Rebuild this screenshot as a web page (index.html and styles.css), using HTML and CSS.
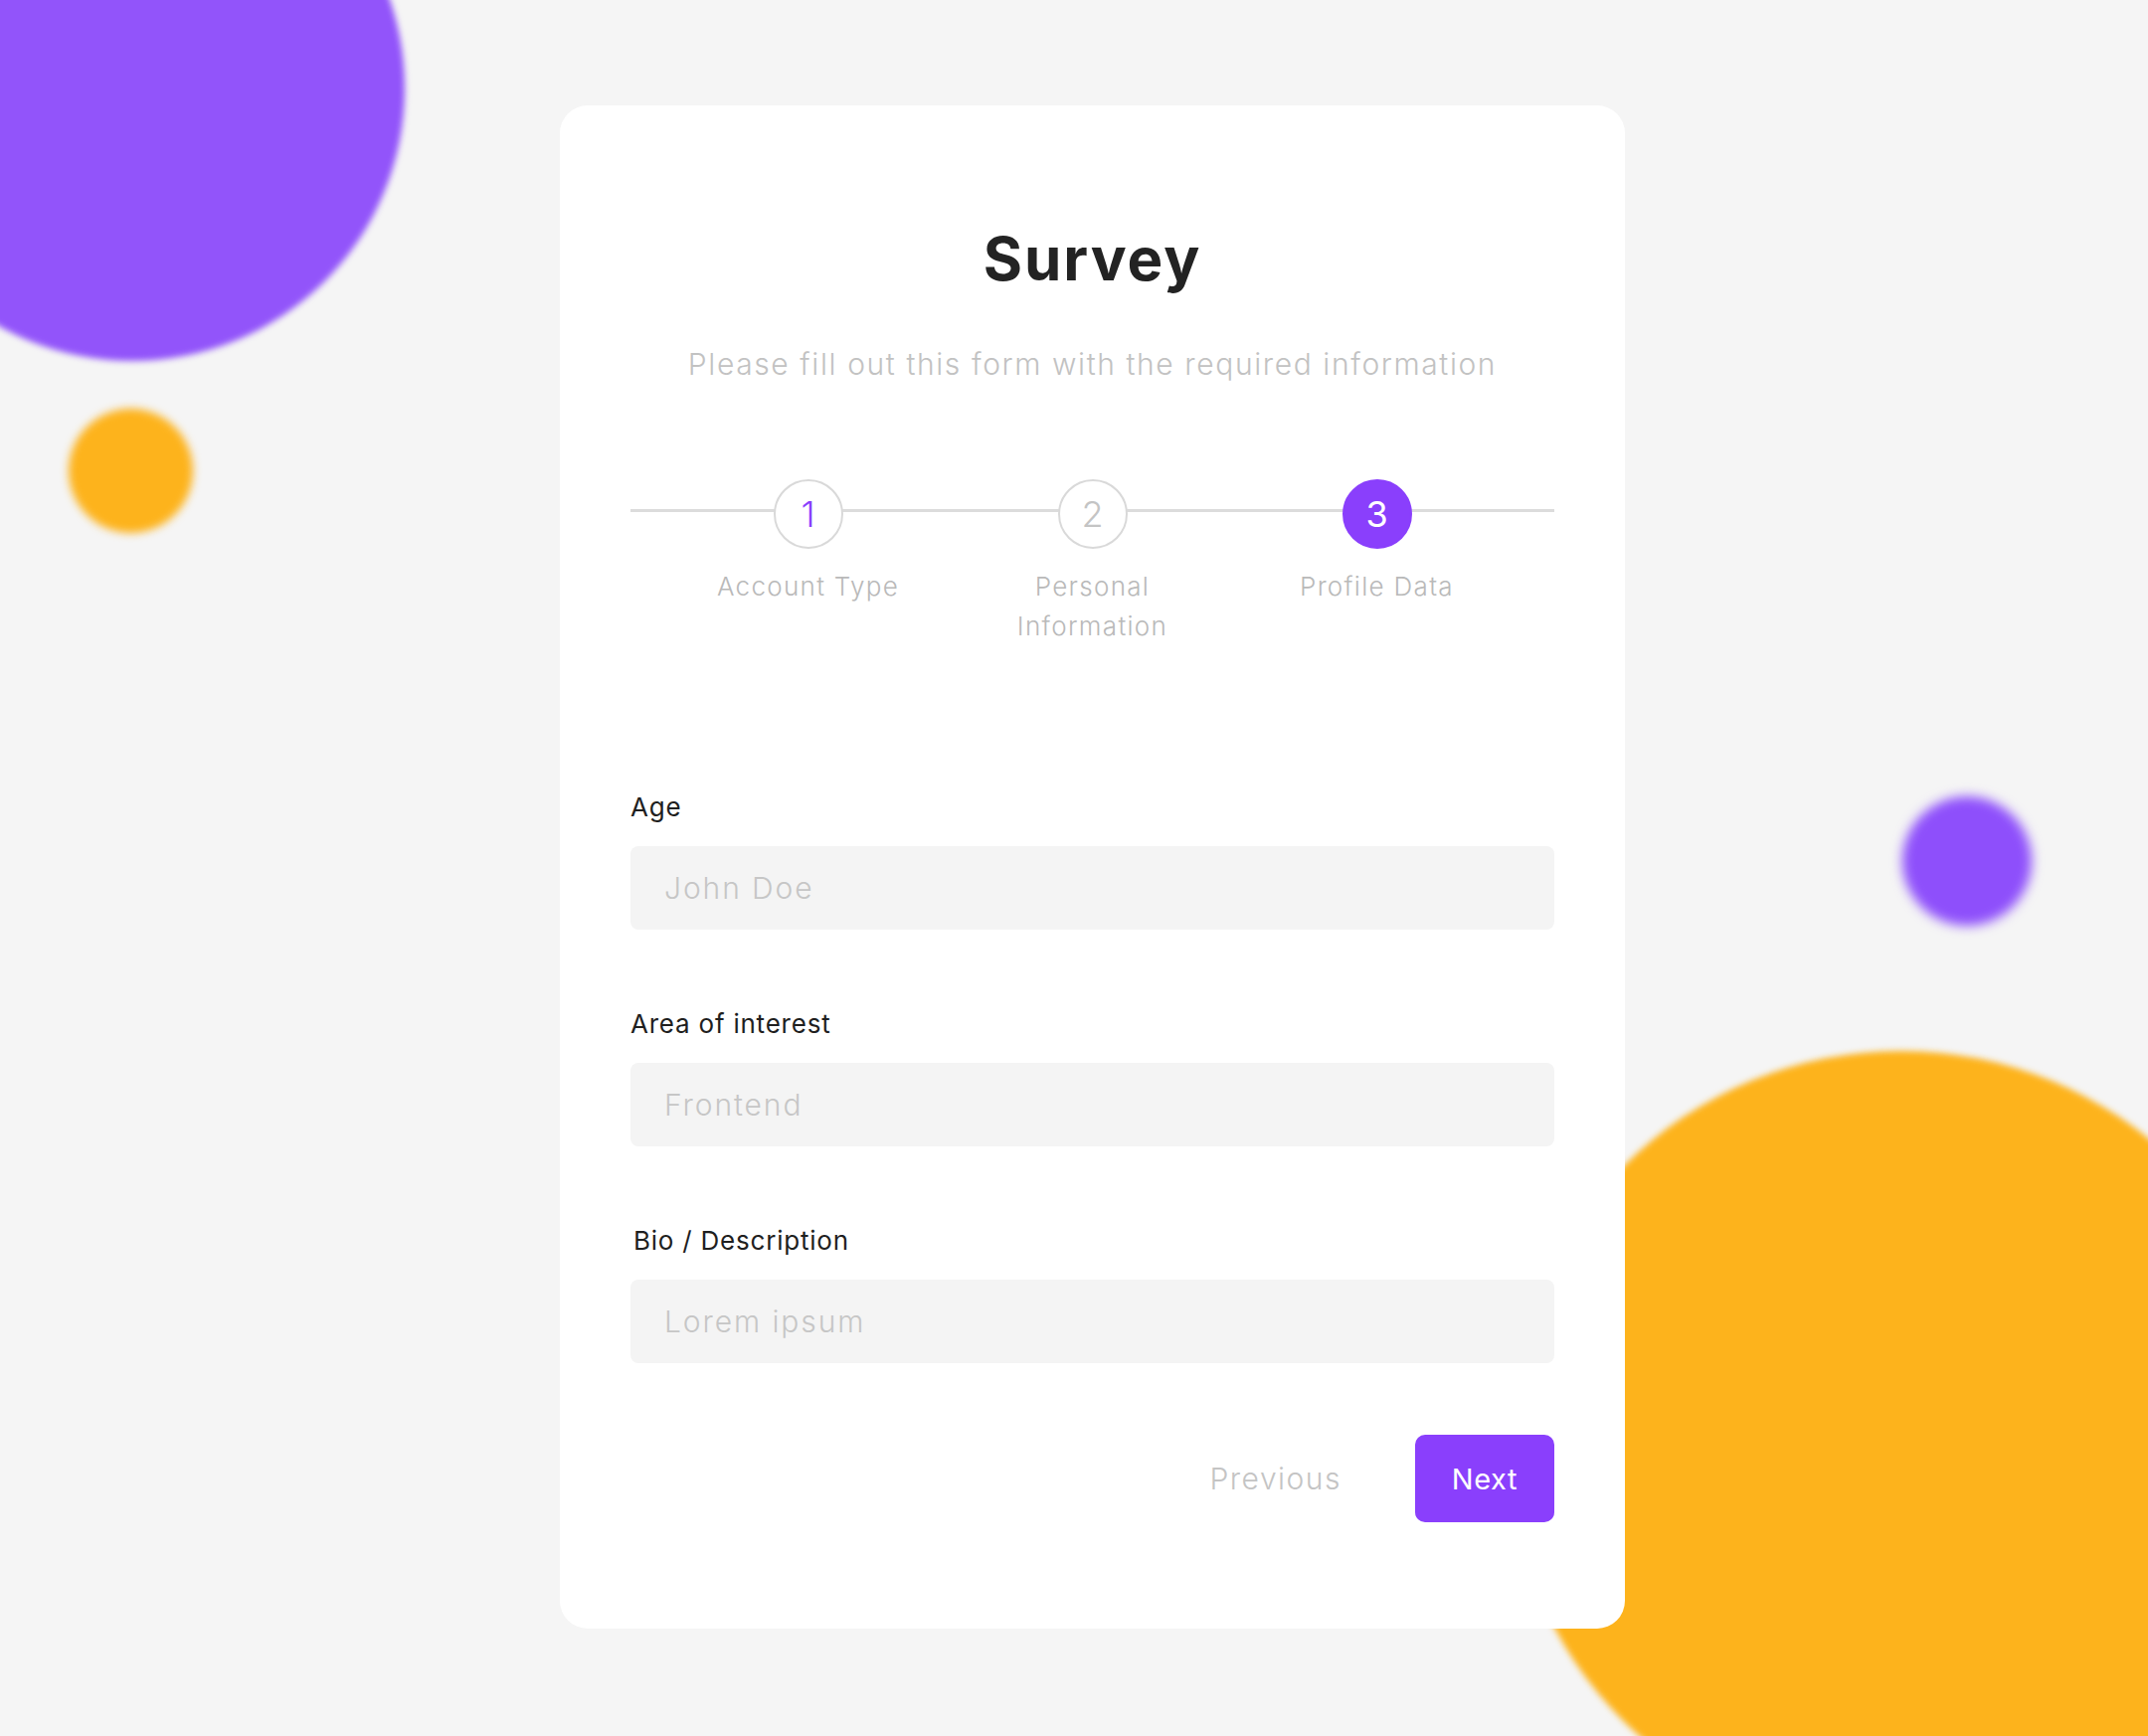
FILE: index.html
```html
<!DOCTYPE html>
<html lang="en">
<head>
<meta charset="utf-8">
<title>Survey</title>
<link rel="stylesheet" href="styles.css">
</head>
<body>
<div class="bg" aria-hidden="true">
  <div class="blob blob-purple-lg"></div>
  <div class="blob blob-orange-sm"></div>
  <div class="blob blob-purple-sm"></div>
  <div class="blob blob-orange-lg"></div>
</div>
<main class="page">
  <section class="card">
    <h1 class="title">Survey</h1>
    <p class="subtitle">Please fill out this form with the required information</p>
    <ol class="stepper">
      <li class="step step-first">
        <span class="step-num">1</span>
        <span class="step-label">Account Type</span>
      </li>
      <li class="step">
        <span class="step-num">2</span>
        <span class="step-label">Personal Information</span>
      </li>
      <li class="step step-active">
        <span class="step-num">3</span>
        <span class="step-label">Profile Data</span>
      </li>
    </ol>
    <form class="form">
      <div class="field">
        <label class="field-label" for="age">Age</label>
        <input class="field-input" id="age" type="text" placeholder="John Doe">
      </div>
      <div class="field">
        <label class="field-label" for="interest">Area of interest</label>
        <input class="field-input" id="interest" type="text" placeholder="Frontend">
      </div>
      <div class="field">
        <label class="field-label field-label-bio" for="bio">Bio / Description</label>
        <input class="field-input" id="bio" type="text" placeholder="Lorem ipsum">
      </div>
      <div class="actions">
        <button type="button" class="btn-prev">Previous</button>
        <button type="button" class="btn-next">Next</button>
      </div>
    </form>
  </section>
</main>
</body>
</html>
```
FILE: styles.css
```css
html, body {
  margin: 0;
  padding: 0;
}
body {
  background: #f5f5f5;
  font-family: Inter, "Open Sans", "Liberation Sans", sans-serif;
  min-height: 1746px;
  overflow: hidden;
  position: relative;
}

/* decorative background blobs */
.bg {
  position: fixed;
  inset: 0;
  overflow: hidden;
  z-index: 0;
}
.blob {
  position: absolute;
  border-radius: 50%;
}
.blob-purple-lg {
  left: -141px;
  top: -185px;
  width: 548px;
  height: 548px;
  background: #9254fa;
  filter: blur(3px);
}
.blob-orange-sm {
  left: 69px;
  top: 411px;
  width: 125px;
  height: 125px;
  background: #fdb31c;
  filter: blur(4px);
}
.blob-purple-sm {
  left: 1913px;
  top: 801px;
  width: 130px;
  height: 130px;
  background: #8e4ffb;
  filter: blur(6px);
}
.blob-orange-lg {
  left: 1517px;
  top: 1057px;
  width: 790px;
  height: 790px;
  background: #fdb31c;
  filter: blur(3px);
}

.page {
  position: relative;
  z-index: 1;
  padding: 106px 0 0 563px;
}
.card {
  width: 1071px;
  box-sizing: border-box;
  padding: 118px 71px 107px;
  background: #ffffff;
  border-radius: 28px;
}

.title {
  margin: 0;
  text-align: center;
  font-size: 60px;
  line-height: 72px;
  font-weight: 700;
  color: #232323;
  letter-spacing: 2px;
}
.subtitle {
  margin: 50px 0 0;
  text-align: center;
  font-size: 30px;
  line-height: 40px;
  font-weight: 300;
  color: #c2c2c2;
  letter-spacing: 1.6px;
}

.stepper {
  list-style: none;
  margin: 96px 0 0;
  padding: 0;
  position: relative;
  display: grid;
  grid-template-columns: repeat(3, 286px);
  justify-content: center;
}
.stepper::before {
  content: "";
  position: absolute;
  left: 0;
  right: 0;
  top: 30px;
  height: 3px;
  background: #dcdcdc;
}
.step {
  display: flex;
  flex-direction: column;
  align-items: center;
}
.step-num {
  position: relative;
  width: 70px;
  height: 70px;
  box-sizing: border-box;
  border: 2px solid #d9d9d9;
  border-radius: 50%;
  background: #ffffff;
  display: flex;
  align-items: center;
  justify-content: center;
  font-size: 36px;
  font-weight: 300;
  color: #c4c4c4;
}
.step-first .step-num {
  color: #8a3ffc;
}
.step-active .step-num {
  background: #8a3ffc;
  border-color: #8a3ffc;
  color: #ffffff;
  font-weight: 400;
}
.step-label {
  margin-top: 18px;
  width: 210px;
  text-align: center;
  font-size: 26px;
  line-height: 40px;
  font-weight: 300;
  color: #b9b9b9;
  letter-spacing: 1.3px;
}

.form {
  margin: 144px 0 0;
}
.field + .field {
  margin-top: 77px;
}
.field-label {
  display: block;
  margin-bottom: 21px;
  font-size: 26px;
  line-height: 36px;
  font-weight: 400;
  color: #1f1f1f;
  letter-spacing: 0.03em;
}
.field-label-bio {
  padding-left: 3px;
}
.field-input {
  display: block;
  width: 100%;
  height: 84px;
  box-sizing: border-box;
  border: 0;
  border-radius: 8px;
  background: #f4f4f4;
  padding: 0 34px;
  font-family: inherit;
  font-size: 30px;
  font-weight: 300;
  color: #333;
  letter-spacing: 1.9px;
  outline: none;
}
.field-input::placeholder {
  color: #c6c6c6;
}

.actions {
  margin-top: 72px;
  display: flex;
  justify-content: flex-end;
  align-items: center;
}
.btn-prev {
  background: none;
  border: 0;
  padding: 0;
  margin-right: 74px;
  font-family: inherit;
  font-size: 30px;
  font-weight: 300;
  color: #c4c4c4;
  letter-spacing: 1.5px;
  cursor: pointer;
}
.btn-next {
  width: 140px;
  height: 88px;
  border: 0;
  border-radius: 10px;
  background: #8a3ffc;
  color: #ffffff;
  font-family: inherit;
  font-size: 29px;
  font-weight: 400;
  letter-spacing: 0.02em;
  cursor: pointer;
}
```
